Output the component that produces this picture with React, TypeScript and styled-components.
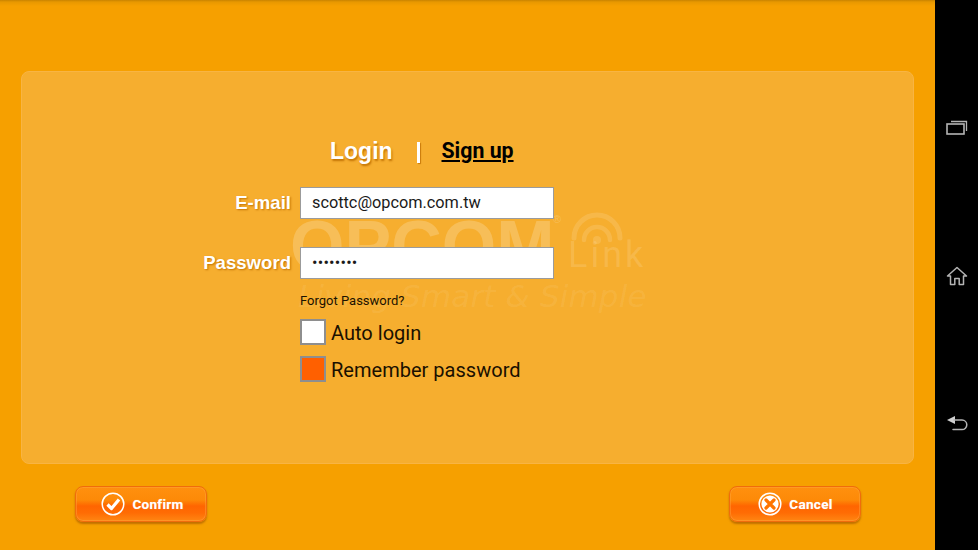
import React from 'react';
import styled, {createGlobalStyle} from 'styled-components';

const GlobalStyle = createGlobalStyle`
  html, body {
    margin: 0;
    padding: 0;
    background: #000;
  }
  body {
    font-family: "Roboto", "Liberation Sans", sans-serif;
  }
`;

const Screen = styled.div`
  display: flex;
  width: 978px;
  height: 550px;
  overflow: hidden;
`;

const Main = styled.div`
  box-sizing: border-box;
  width: 935px;
  height: 550px;
  padding: 71px 21px 0;
  background: linear-gradient(#c98300 0, #e89800 2px, #f6a000 6px, #f6a000 100%);
`;

const Panel = styled.div`
  position: relative;
  box-sizing: border-box;
  width: 893px;
  height: 393px;
  padding-top: 66px;
  background: #f6ae2f;
  border: 1px solid #f8b443;
  border-radius: 8px;
`;

const Watermark = styled.div`
  position: absolute;
  left: 268px;
  top: 138px;
  width: 360px;
  height: 105px;
  color: rgba(255, 255, 255, 0.08);
`;

const WatermarkBrand = styled.span`
  position: absolute;
  left: 0;
  top: 4px;
  font: 700 70px/64px "Liberation Sans", sans-serif;
  color: rgba(255, 255, 255, 0.2);
`;

const WatermarkReg = styled.span`
  position: absolute;
  left: 263px;
  top: 3px;
  font: 400 11px/12px "Liberation Sans", sans-serif;
  color: rgba(255, 255, 255, 0.2);
`;

const WatermarkLink = styled.span`
  position: absolute;
  left: 278px;
  top: 24px;
  font: 400 36px/42px "Roboto", sans-serif;
  letter-spacing: 3px;
  color: rgba(255, 255, 255, 0.13);
`;

const WatermarkTag = styled.span`
  position: absolute;
  left: 8px;
  top: 68px;
  font: italic 400 31px/36px "DejaVu Sans", sans-serif;
  letter-spacing: 0.15px;
  white-space: nowrap;
`;

const WifiMark = styled.svg`
  position: absolute;
  left: 281px;
  top: 2px;
  color: rgba(255, 255, 255, 0.13);
`;

const Tabs = styled.div`
  position: relative;
  display: flex;
  align-items: center;
  height: 26px;
  margin: 0 0 23px 308px;
`;

const ActiveTab = styled.span`
  width: 87px;
  font: 700 23px/26px "Liberation Sans", sans-serif;
  color: #fff;
  text-shadow: 1px 2px 2px rgba(190, 110, 0, 0.9);
`;

const TabDivider = styled.span`
  width: 2.5px;
  height: 21px;
  margin: 2px 22px 0 0;
  background: #fff;
  box-shadow: 1px 1px 1px rgba(190, 110, 0, 0.8);
`;

const TabLink = styled.a`
  font: 700 21.3px/26px "Roboto", "Liberation Sans", sans-serif;
  color: #000;
  text-decoration: underline;
`;

const Form = styled.div`
  position: relative;
  display: grid;
  grid-template-columns: 269px 254px;
  column-gap: 9px;
  row-gap: 28px;
  align-items: center;
`;

const Label = styled.label`
  margin-top: -1px;
  text-align: right;
  font: 700 18.6px/24px "Liberation Sans", sans-serif;
  color: #fff;
  text-shadow: 1px 1px 2px rgba(190, 110, 0, 0.9);
`;

const Field = styled.div<{$secret?: boolean}>`
  box-sizing: border-box;
  height: 32px;
  padding-left: 11px;
  background: #fff;
  border: 1px solid #9b9b9b;
  font: 400 16.3px/29px "Roboto", sans-serif;
  letter-spacing: ${p => (p.$secret ? '0.2px' : '0')};
  color: #1a1a1a;
`;

const Options = styled.div`
  position: relative;
  margin: 14px 0 0 278px;
`;

const ForgotLink = styled.div`
  height: 16px;
  font: 400 13px/16px "Roboto", sans-serif;
  color: #1c1200;
`;

const OptionRow = styled.div`
  display: flex;
  align-items: center;
  gap: 5px;
  height: 27px;
  margin-top: 11px;
  font: 400 20px/29px "Roboto", sans-serif;
  letter-spacing: 0.02px;
  color: #1a1000;

  & + & {
    margin-top: 10px;
  }
`;

const CheckBox = styled.span<{$on?: boolean}>`
  box-sizing: border-box;
  width: 26px;
  height: 26px;
  margin-top: -3px;
  background: ${p => (p.$on ? '#ff6000' : '#fff')};
  border: 2px solid #8e8e8e;
`;

const Actions = styled.div`
  display: flex;
  justify-content: space-between;
  margin: 22px 53px 0 54px;
`;

const ActionButton = styled.button<{$shift: number}>`
  display: flex;
  align-items: center;
  justify-content: center;
  gap: 7px;
  box-sizing: border-box;
  width: 132px;
  height: 36px;
  padding: 0 0 0 ${p => p.$shift}px;
  border: 1px solid #f06c0c;
  border-radius: 8px;
  background: linear-gradient(#ff900e 0, #fd8a08 38%, #ff6500 56%, #ff6c04 76%, #ff8612 100%);
  box-shadow: 0 2px 2px rgba(170, 90, 0, 0.7), inset 0 0 0 1px rgba(255, 170, 70, 0.4);
  font: 700 13.5px/16px "Roboto", "Liberation Sans", sans-serif;
  color: #fff;
  letter-spacing: 0.3px;
  text-shadow: 0 0 1px rgba(255, 255, 255, 0.5);
`;

const NavBar = styled.div`
  display: flex;
  flex-direction: column;
  align-items: center;
  width: 43px;
  padding-top: 119px;
  box-sizing: border-box;
  background: #000;
  color: #b4b4b4;
`;

const NavIcon = styled.svg<{$gap: number}>`
  margin-bottom: ${p => p.$gap}px;
`;

const CheckIcon = () => (
  <svg width="24" height="24" viewBox="0 0 24 24">
    <circle cx="12" cy="12" r="10.8" fill="none" stroke="#fff" strokeWidth="1.5" />
    <path d="M6.5 12.5 L10.5 16.5 L18 7.5" fill="none" stroke="#fff" strokeWidth="3.2" strokeLinejoin="round" />
  </svg>
);

const CrossIcon = () => (
  <svg width="24" height="24" viewBox="0 0 24 24">
    <circle cx="12" cy="12" r="10.8" fill="none" stroke="#fff" strokeWidth="1.5" />
    <circle cx="12" cy="12" r="8.6" fill="#fff" />
    <path d="M8 8 L16 16 M16 8 L8 16" fill="none" stroke="#ff7400" strokeWidth="3.2" strokeLinecap="round" />
  </svg>
);

const App: React.FC = () => {
  return (
    <Screen>
      <GlobalStyle />
      <Main>
        <Panel>
          <Watermark>
            <WatermarkBrand>OPCOM</WatermarkBrand>
            <WatermarkReg>®</WatermarkReg>
            <WifiMark width="52" height="34" viewBox="0 0 52 34" fill="none" stroke="currentColor" strokeLinecap="round">
              <path d="M3 26 A23 23 0 0 1 49 26" strokeWidth="5" />
              <path d="M13 28 A13 13 0 0 1 39 28" strokeWidth="4.5" />
              <circle cx="26" cy="28" r="4" fill="currentColor" stroke="none" />
            </WifiMark>
            <WatermarkLink>Link</WatermarkLink>
            <WatermarkTag>Living Smart &amp; Simple</WatermarkTag>
          </Watermark>
          <Tabs>
            <ActiveTab>Login</ActiveTab>
            <TabDivider />
            <TabLink>Sign up</TabLink>
          </Tabs>
          <Form>
            <Label>E-mail</Label>
            <Field>scottc@opcom.com.tw</Field>
            <Label>Password</Label>
            <Field $secret>••••••••</Field>
          </Form>
          <Options>
            <ForgotLink>Forgot Password?</ForgotLink>
            <OptionRow>
              <CheckBox />
              Auto login
            </OptionRow>
            <OptionRow>
              <CheckBox $on />
              Remember password
            </OptionRow>
          </Options>
        </Panel>
        <Actions>
          <ActionButton $shift={3}>
            <CheckIcon />
            Confirm
          </ActionButton>
          <ActionButton $shift={1}>
            <CrossIcon />
            Cancel
          </ActionButton>
        </Actions>
      </Main>
      <NavBar>
        <NavIcon $gap={131} width="22" height="16" viewBox="0 0 22 16" fill="none" stroke="currentColor">
          <rect x="1" y="5" width="17" height="10" strokeWidth="1.6" />
          <path d="M5 2.5 H20.5 V12" strokeWidth="1.3" />
        </NavIcon>
        <NavIcon $gap={129} width="22" height="20" viewBox="0 0 22 20" fill="none" stroke="currentColor" strokeWidth="1.5">
          <path d="M1.5 10 L11 1.5 L20.5 10 L17.5 10 V18.5 H13.2 V12.5 H8.8 V18.5 H4.5 V10 Z" strokeLinejoin="round" />
        </NavIcon>
        <NavIcon $gap={0} width="22" height="16" viewBox="0 0 22 16">
          <path d="M1 5 L9 1 V9 Z" fill="#d0d0d0" />
          <path d="M8 5 H16 A4.8 4.8 0 0 1 16 14.6 H7" fill="none" stroke="currentColor" strokeWidth="1.5" strokeLinecap="round" />
        </NavIcon>
      </NavBar>
    </Screen>
  );
};

export default App;
